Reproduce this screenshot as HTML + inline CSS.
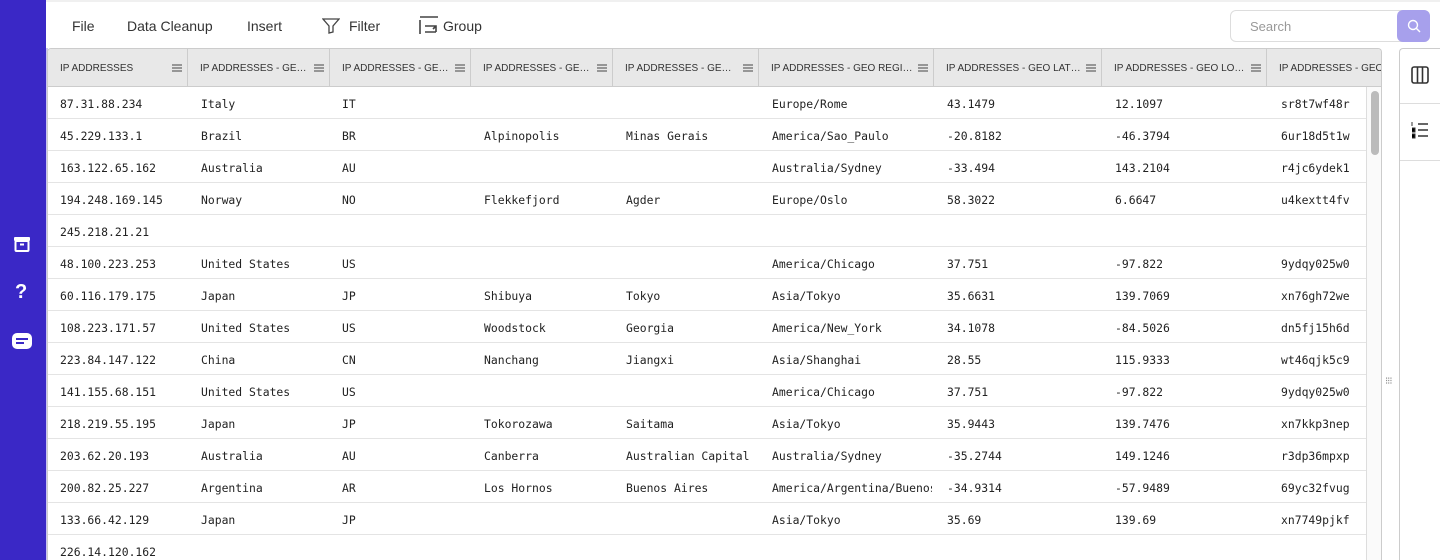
<!DOCTYPE html>
<html><head><meta charset="utf-8"><style>
*{margin:0;padding:0;box-sizing:border-box}
html,body{width:1440px;height:560px;overflow:hidden}
body{background:#fff;font-family:"Liberation Sans",sans-serif;position:relative}
.side{position:absolute;left:0;top:0;width:46px;height:560px;background:#3a28c6}
.lav{position:absolute;left:46px;top:48px;width:2px;height:512px;background:#c9c3f2}
.topline{position:absolute;left:46px;top:0;width:1394px;height:2px;background:#f0f0f0}
.menu{position:absolute;top:18px;font-size:14px;color:#333}
.search{position:absolute;left:1230px;top:10px;width:200px;height:32px;border:1px solid #ddd;border-radius:6px}
.search span{position:absolute;left:19px;top:8px;font-size:13px;color:#999}
.sbtn{position:absolute;right:-1px;top:-1px;width:33px;height:32px;background:#a7a0ec;border-radius:6px}
.tbl{position:absolute;left:47px;top:48px;width:1335px;height:512px;border:1px solid #ccc;border-bottom:none;border-radius:4px 4px 0 0;overflow:hidden}
.hdr{position:absolute;left:0;top:0;height:38px;width:1400px;background:#e8e8e8;border-bottom:1px solid #ccc}
.hc{position:absolute;top:0;height:38px;border-right:1px solid #ccc;font-size:10px;color:#333;padding:14px 19px 0 12px;white-space:nowrap;overflow:hidden;text-overflow:ellipsis}
.hc svg{position:absolute;right:5px;top:15px}
.row{position:absolute;left:0;width:1318px;height:32px;border-bottom:1px solid #e4e4e4;font-family:"DejaVu Sans Mono","Liberation Mono",monospace;font-size:11.4px;color:#222}
.row span{position:absolute;top:10px;white-space:nowrap;overflow:hidden}
.scroll{position:absolute;left:1318px;top:38px;width:16px;height:490px;border-left:1px solid #ddd;background:#fafafa}
.thumb{position:absolute;left:4px;top:4px;width:8px;height:64px;background:#bbb;border-radius:4px}
.rp{position:absolute;left:1399px;top:48px;width:41px;height:512px;border-left:1px solid #ccc;border-top:1px solid #ccc;border-radius:4px 0 0 0}
</style></head><body>
<div class="side"></div><div class="topline"></div><div class="lav"></div>
<svg style="position:absolute;left:13px;top:236px" width="18" height="17" viewBox="0 0 18 17"><rect x="1" y="1" width="16" height="4" rx="1" fill="#fff"/><rect x="2.5" y="5" width="13" height="10" rx="1" fill="none" stroke="#fff" stroke-width="2"/><rect x="7" y="7.5" width="4" height="2" fill="#fff"/></svg>
<div style="position:absolute;left:15px;top:281px;color:#fff;font-weight:bold;font-size:20px">?</div>
<svg style="position:absolute;left:12px;top:333px" width="20" height="16" viewBox="0 0 20 16"><rect x="0" y="0" width="20" height="16" rx="5" fill="#fff"/><rect x="4" y="5" width="12" height="2" fill="#3a28c6"/><rect x="4" y="9" width="8" height="2" fill="#3a28c6"/></svg>
<div class="menu" style="left:72px">File</div>
<div class="menu" style="left:127px">Data Cleanup</div>
<div class="menu" style="left:247px">Insert</div>
<svg style="position:absolute;left:322px;top:18px" width="18" height="16" viewBox="0 0 18 16"><path d="M1 1H17L11 8V14L7 15V8Z" fill="none" stroke="#444" stroke-width="1.3"/></svg>
<div class="menu" style="left:349px">Filter</div>
<svg style="position:absolute;left:419px;top:16px" width="20" height="19" viewBox="0 0 20 19"><path d="M1 1H19M1 4V18M6 10H17V16M6 16H17M14 13L17 10" fill="none" stroke="#444" stroke-width="1.6"/></svg>
<div class="menu" style="left:443px">Group</div>
<div class="search"><span>Search</span><div class="sbtn"><svg style="position:absolute;left:10px;top:9px" width="14" height="14" viewBox="0 0 14 14"><circle cx="6" cy="6" r="4.5" fill="none" stroke="#fff" stroke-width="1.4"/><path d="M9.5 9.5L13 13" stroke="#fff" stroke-width="1.4"/></svg></div></div>
<div class="tbl">
<div class="hdr" id="hdr"></div>
<div id="rows"></div>
<div class="scroll"><div class="thumb"></div></div>
</div>
<div style="position:absolute;left:1385px;top:380px;font-size:10px;color:#888;line-height:4px;letter-spacing:-1px">⁝⁝⁝</div>
<div class="rp">
<svg style="position:absolute;left:11px;top:17px" width="18" height="18" viewBox="0 0 18 18"><rect x="1" y="1" width="16" height="16" rx="2" fill="none" stroke="#333" stroke-width="1.6"/><path d="M6.5 1V17M11.5 1V17" stroke="#333" stroke-width="1.6"/></svg>
<div style="position:absolute;left:0;top:54px;width:41px;border-top:1px solid #ddd"></div>
<svg style="position:absolute;left:11px;top:72px" width="18" height="18" viewBox="0 0 18 18"><path d="M7 3H17M7 9H17M7 15H17" stroke="#333" stroke-width="1.6"/><path d="M1 1V5M1 7H4V11H1M1 13H4V17H1" stroke="#333" stroke-width="1"/></svg>
<div style="position:absolute;left:0;top:111px;width:41px;border-top:1px solid #ddd"></div>
</div>
<script>
var H=[[0,140,"IP ADDRESSES"],[140,142,"IP ADDRESSES - GEO COUNTRY"],[282,141,"IP ADDRESSES - GEO CODE"],[423,142,"IP ADDRESSES - GEO CITY"],[565,146,"IP ADDRESSES - GEO CITY REGION"],[711,175,"IP ADDRESSES - GEO REGION"],[886,168,"IP ADDRESSES - GEO LATITUDE"],[1054,165,"IP ADDRESSES - GEO LONGITUDE"],[1219,200,"IP ADDRESSES - GEO I"]],hh="";
var ic='<svg width="10" height="8" viewBox="0 0 10 8"><path d="M0 1H10M0 4H10M0 7H10" stroke="#444" stroke-width="1.1"/></svg>';
H.forEach(function(c,i){hh+='<div class="hc" style="left:'+c[0]+'px;width:'+c[1]+'px">'+c[2]+(i<8?ic:'')+'</div>'});
document.getElementById("hdr").innerHTML=hh;
var d=[["87.31.88.234","Italy","IT","","","Europe/Rome","43.1479","12.1097","sr8t7wf48r"],
["45.229.133.1","Brazil","BR","Alpinopolis","Minas Gerais","America/Sao_Paulo","-20.8182","-46.3794","6ur18d5t1w"],
["163.122.65.162","Australia","AU","","","Australia/Sydney","-33.494","143.2104","r4jc6ydek1"],
["194.248.169.145","Norway","NO","Flekkefjord","Agder","Europe/Oslo","58.3022","6.6647","u4kextt4fv"],
["245.218.21.21","","","","","","","",""],
["48.100.223.253","United States","US","","","America/Chicago","37.751","-97.822","9ydqy025w0"],
["60.116.179.175","Japan","JP","Shibuya","Tokyo","Asia/Tokyo","35.6631","139.7069","xn76gh72we"],
["108.223.171.57","United States","US","Woodstock","Georgia","America/New_York","34.1078","-84.5026","dn5fj15h6d"],
["223.84.147.122","China","CN","Nanchang","Jiangxi","Asia/Shanghai","28.55","115.9333","wt46qjk5c9"],
["141.155.68.151","United States","US","","","America/Chicago","37.751","-97.822","9ydqy025w0"],
["218.219.55.195","Japan","JP","Tokorozawa","Saitama","Asia/Tokyo","35.9443","139.7476","xn7kkp3nep"],
["203.62.20.193","Australia","AU","Canberra","Australian Capital T","Australia/Sydney","-35.2744","149.1246","r3dp36mpxp"],
["200.82.25.227","Argentina","AR","Los Hornos","Buenos Aires","America/Argentina/Buenos_","-34.9314","-57.9489","69yc32fvug"],
["133.66.42.129","Japan","JP","","","Asia/Tokyo","35.69","139.69","xn7749pjkf"],
["226.14.120.162","","","","","","","",""]];
var L=[12,153,294,436,578,724,899,1067,1233],W=[125,128,128,128,130,160,150,150,100],h="";
d.forEach(function(r,i){h+='<div class="row" style="top:'+(38+i*32)+'px">';r.forEach(function(c,j){h+='<span style="left:'+L[j]+'px;max-width:'+W[j]+'px">'+c+'</span>'});h+='</div>'});
document.getElementById("rows").innerHTML=h;
</script>
</body></html>
